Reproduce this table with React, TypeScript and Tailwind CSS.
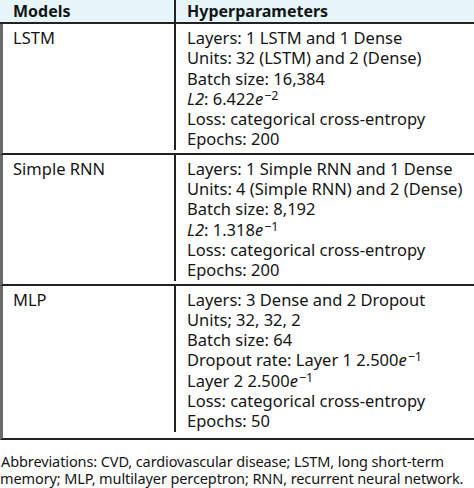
import type { ReactNode } from "react";

type Row = { model: string; lines: ReactNode[] };

const Exp = ({ base, pow }: { base: string; pow: string }) => (
  <>
    {base}
    <i>e</i>
    <sup className="relative -top-[5px] ml-[1px] text-[12.5px] leading-none">{pow}</sup>
  </>
);

const rows: Row[] = [
  {
    model: "LSTM",
    lines: [
      "Layers: 1 LSTM and 1 Dense",
      "Units: 32 (LSTM) and 2 (Dense)",
      "Batch size: 16,384",
      <>
        <i>L2</i>: <Exp base="6.422" pow="−2" />
      </>,
      "Loss: categorical cross-entropy",
      "Epochs: 200",
    ],
  },
  {
    model: "Simple RNN",
    lines: [
      "Layers: 1 Simple RNN and 1 Dense",
      "Units: 4 (Simple RNN) and 2 (Dense)",
      "Batch size: 8,192",
      <>
        <i>L2</i>: <Exp base="1.318" pow="−1" />
      </>,
      "Loss: categorical cross-entropy",
      "Epochs: 200",
    ],
  },
  {
    model: "MLP",
    lines: [
      "Layers: 3 Dense and 2 Dropout",
      "Units; 32, 32, 2",
      "Batch size: 64",
      <>
        Dropout rate: Layer 1 <Exp base="2.500" pow="−1" />
      </>,
      <>
        Layer 2 <Exp base="2.500" pow="−1" />
      </>,
      "Loss: categorical cross-entropy",
      "Epochs: 50",
    ],
  },
];

export default function App() {
  return (
    <div
      className="h-[488px] w-[474px] overflow-hidden bg-white text-[#151515]"
      style={{ fontFamily: '"Noto Sans", "Open Sans", sans-serif' }}
    >
      <div className="grid grid-cols-[176px_1fr] bg-[#e6f6f8] border-b-2 border-[#222] text-[16px] font-bold leading-[22px]">
        <div className="border-r-2 border-[#222] pl-[13px]">Models</div>
        <div className="pl-[11px]">Hyperparameters</div>
      </div>
      {rows.map((row, i) => (
        <div
          key={row.model}
          className={`grid grid-cols-[173px_1fr] border-l-[3px] border-l-[#6b6b6b] border-b-2 border-b-[#222] text-[16.5px] leading-[20.3px] ${
            i === 2 ? "pb-[6px]" : "pb-[3px]"
          }`}
        >
          <div className="border-r-2 border-[#222] pl-[10px] pt-[4px]">{row.model}</div>
          <div className="pl-[11px] pt-[4px]">
            {row.lines.map((line, j) => (
              <div key={j} className="whitespace-nowrap">
                {line}
              </div>
            ))}
          </div>
        </div>
      ))}
      <div className="pt-[13px] text-[14.5px] leading-[17.5px] tracking-[-0.1px] whitespace-nowrap">
        <div className="pl-[1px]">Abbreviations: CVD, cardiovascular disease; LSTM, long short-term</div>
        <div>memory; MLP, multilayer perceptron; RNN, recurrent neural network.</div>
      </div>
    </div>
  );
}
